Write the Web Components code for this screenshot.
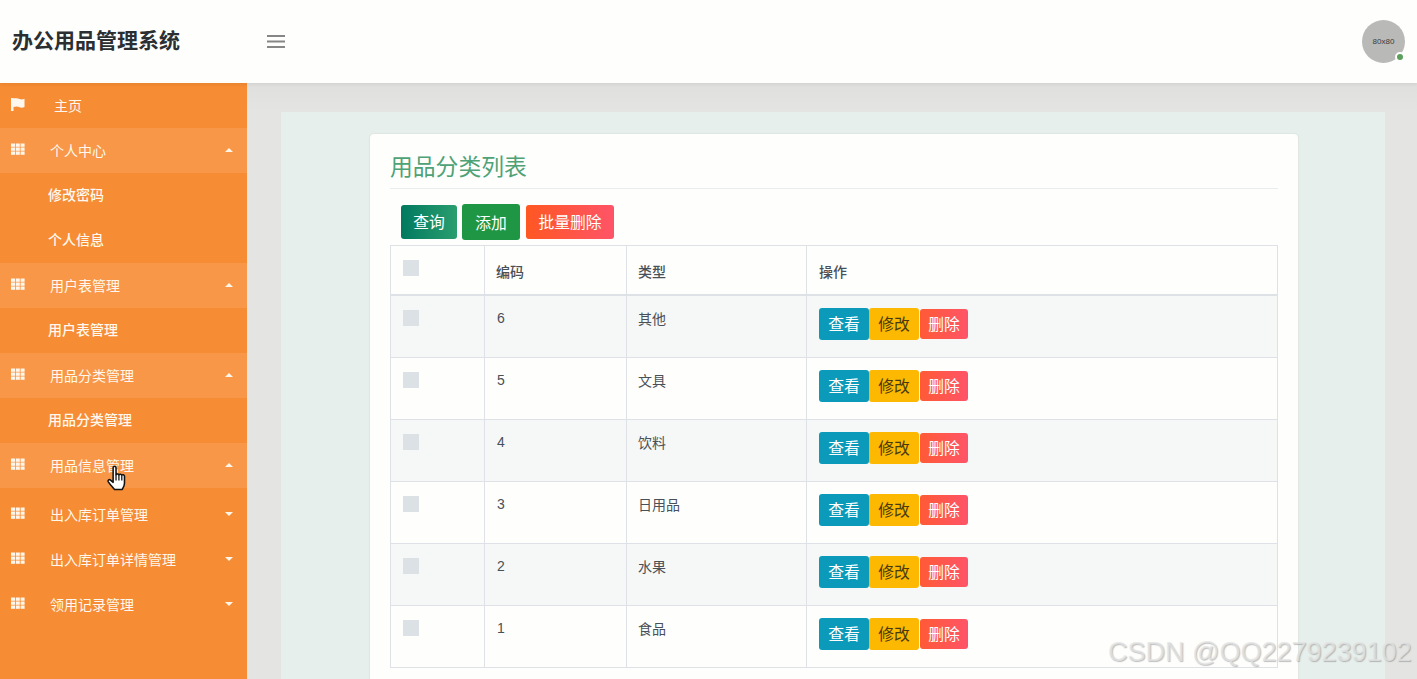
<!DOCTYPE html>
<html lang="zh">
<head>
<meta charset="utf-8">
<title>办公用品管理系统</title>
<style>
  html, body { margin: 0; height: 100%; overflow: hidden; }
  body {
    font-family: "Liberation Sans", "Noto Sans CJK SC", sans-serif;
    color: #495057;
    background: #e3e4e2;
  }
  #app { display: flex; flex-direction: column; height: 679px; position: relative; overflow: hidden; }
  #body { display: flex; flex: 1; min-height: 0; }
</style>
</head>
<body>
<div id="app">
  <top-bar title="办公用品管理系统"></top-bar>
  <div id="body">
    <side-menu></side-menu>
    <main-area>
      <list-card heading="用品分类列表">
        <tool-btn kind="search">查询</tool-btn>
        <tool-btn kind="add">添加</tool-btn>
        <tool-btn kind="del">批量删除</tool-btn>
      </list-card>
    </main-area>
  </div>
  <hand-cursor></hand-cursor>
  <water-mark>CSDN @QQ2279239102</water-mark>
</div>

<script>
// 顶部栏
class TopBar extends HTMLElement {
  connectedCallback() {
    this.attachShadow({mode: "open"}).innerHTML = `
      <style>
        :host { display: flex; align-items: center; height: 83px; flex: none; background: #fefffd;
                box-shadow: 0 1px 4px rgba(0,0,0,.08); position: relative; z-index: 2; }
        h1 { margin: 0 0 2px 12px; width: 255px; font-size: 21px; font-weight: 700; color: #2b2f31; line-height: 81px; }
        .burger { width: 18px; height: 13px; display: block; }
        .avatar { margin-left: auto; margin-right: 12px; width: 43px; height: 43px; border-radius: 50%;
                  background: #b9b9b7; display: flex; align-items: center; justify-content: center;
                  position: relative; font-size: 8px; color: #3c3c3c; }
        .dot { position: absolute; right: 0; bottom: 1px; width: 6px; height: 6px; border-radius: 50%;
               background: #5c9e5c; border: 2px solid #fefffd; }
      </style>
      <h1>${this.getAttribute("title")}</h1>
      <svg class="burger" viewBox="0 0 18 13"><path d="M0 1h18M0 6.500h18M0 12h18" stroke="#868686" stroke-width="2"/></svg>
      <div class="avatar">80x80<span class="dot"></span></div>`;
  }
}
customElements.define("top-bar", TopBar);

// 左侧菜单一项
const FLAG = `<svg width="14" height="13" viewBox="0 0 14 13"><path d="M0 0h2.500v13H0zM2.500 .6C5 -.2 7 .2 8.500 1c1.500.7 3 .6 5-.2v8.200c-2 .9-3.500.9-5 .2-1.500-.8-3.500-1.100-6-.2z" fill="#fff8ee"/></svg>`;
const GRID = `<svg width="14" height="13" viewBox="0 0 14 13" fill="#fff6ea">` +
  [0.500, 4.500, 8.500].map(y => [0, 4.800, 9.600].map(x => `<rect x="${x}" y="${y}" width="4" height="3.300"/>`).join("")).join("") + `</svg>`;

class MenuItem extends HTMLElement {
  connectedCallback() {
    const icon = this.getAttribute("icon");
    const arrow = this.getAttribute("arrow");
    const caret = arrow ? `<svg class="caret" width="8" height="4" viewBox="0 0 8 4"><path d="${arrow == "up" ? "M0 4L4 0l4 4z" : "M0 0l4 4 4-4z"}" fill="#fff6ea"/></svg>` : "";
    this.attachShadow({mode: "open"}).innerHTML = `
      <style>
        :host { display: flex; align-items: center; height: 45px; color: #fff8ee; font-size: 14px; position: relative; }
        :host([open]) { background: #f79747; }
        :host([gap]) { margin-top: 4px; }
        .ico { width: 14px; height: 13px; margin: 0 0 3px 11px; flex: none; display: block; line-height: 0; }
        .lbl { margin-left: 25px; margin-bottom: 1px; }
        :host([home]) .lbl { margin-left: 29px; margin-bottom: 2px; }
        :host([sub]) .lbl { margin-left: 48px; margin-bottom: 3px; font-weight: 500; }
        .caret { margin-left: auto; margin-right: 14px; margin-bottom: 2px; }
      </style>
      ${icon ? `<span class="ico">${icon == "flag" ? FLAG : GRID}</span>` : ""}
      <span class="lbl"><slot></slot></span>
      ${caret}`;
  }
}
customElements.define("menu-item", MenuItem);

class SideMenu extends HTMLElement {
  connectedCallback() {
    const menus = [
      ["主页", "flag", "", 1],
      ["个人中心", "grid", "up"], ["修改密码"], ["个人信息"],
      ["用户表管理", "grid", "up"], ["用户表管理"],
      ["用品分类管理", "grid", "up"], ["用品分类管理"],
      ["用品信息管理", "grid", "up"],
      ["出入库订单管理", "grid", "down", 0, 1],
      ["出入库订单详情管理", "grid", "down"],
      ["领用记录管理", "grid", "down"],
    ];
    this.attachShadow({mode: "open"}).innerHTML = `
      <style>
        :host { display: block; width: 247px; flex: none; background: #f68c33; position: relative; z-index: 1; }
      </style>
      ${menus.map(([t, ic, ar, home, gap]) => {
        if (!ic) return `<menu-item sub>${t}</menu-item>`;
        return `<menu-item icon="${ic}" ${ar ? `arrow="${ar}"` : ""} ${ar == "up" ? "open" : ""} ${home ? "home" : ""} ${gap ? "gap" : ""}>${t}</menu-item>`;
      }).join("")}`;
  }
}
customElements.define("side-menu", SideMenu);

// 内容区底色
class MainArea extends HTMLElement {
  connectedCallback() {
    this.attachShadow({mode: "open"}).innerHTML = `
      <style>
        :host { display: block; flex: 1; min-width: 0; padding: 29px 32px 0 34px;
                background: linear-gradient(180deg, #dfe0de, #e4e5e3 29px); }
        .panel { background: #e6efeb; padding: 22px 87px 0 89px; height: 100%; box-sizing: border-box; }
      </style>
      <div class="panel"><slot></slot></div>`;
  }
}
customElements.define("main-area", MainArea);

// 工具栏按钮 / 行内按钮
class ToolBtn extends HTMLElement {
  connectedCallback() {
    this.attachShadow({mode: "open"}).innerHTML = `
      <style>
        :host { display: inline-flex; align-items: center; justify-content: center; box-sizing: border-box;
                height: 34px; border-radius: 3px; color: #fff; font-size: 15.800px; white-space: nowrap; flex: none; }
        :host([kind=search]) { width: 56px; padding-bottom: 1px; background: linear-gradient(90deg, #01795f, #2a9e6f); }
        :host([kind=add]) { width: 58px; height: 36px; background: #1f9644; margin: 0 6px 0 5px; }
        :host([kind=del]) { width: 88px; padding-bottom: 1px; background: linear-gradient(90deg, #ff5722, #ff5468); }
        :host([kind=view]) { width: 50px; height: 32px; padding-top: 2px; background: #0c9abb; }
        :host([kind=edit]) { width: 50px; height: 32px; padding-top: 2px; background: #fdb802; color: #4a3a10; }
        :host([kind=remove]) { width: 48px; height: 30px; padding-top: 2px; margin-left: 1px; background: linear-gradient(90deg, #ff5a36, #ff5468); }
      </style>
      <slot></slot>`;
  }
}
customElements.define("tool-btn", ToolBtn);

class TableRow extends HTMLElement {
  connectedCallback() {
    const head = this.hasAttribute("head");
    const cells = (this.getAttribute("cells") || "").split(",");
    this.attachShadow({mode: "open"}).innerHTML = `
      <style>
        :host { display: grid; grid-template-columns: 94px 142px 180px 1fr; height: 62px; box-sizing: border-box;
                border-bottom: 1px solid #dee2e6; font-size: 14px; color: #495057; }
        :host([head]) { height: 50px; border-bottom-width: 2px; font-weight: 500; }
        :host([odd]) { background: #f6f8f8; }
        .c { border-right: 1px solid #dee2e6; padding: 11px 12px 0 12px; box-sizing: border-box; line-height: 22px; }
        .kind { padding: 12px 11px 0 11px; }
        .ops-cell { border-right: 0; padding-top: 12px; }
        :host([head]) .c { padding-top: 15px; }
        :host([head]) .num { padding-left: 11px; }
        .c.chk, :host([head]) .c.chk { padding-top: 14px; }
        .box { display: block; width: 16px; height: 16px; background: #dce1e6; }
        .ops { display: flex; align-items: center; height: 32px; }
      </style>
      <div class="c chk"><span class="box"></span></div>
      <div class="c num">${cells[0]}</div>
      <div class="c kind">${cells[1]}</div>
      <div class="c ops-cell">${head ? "操作" : `<div class="ops">
        <tool-btn kind="view">查看</tool-btn><tool-btn kind="edit">修改</tool-btn><tool-btn kind="remove">删除</tool-btn></div>`}</div>`;
  }
}
customElements.define("table-row", TableRow);

class ListCard extends HTMLElement {
  connectedCallback() {
    const rows = [["6", "其他"], ["5", "文具"], ["4", "饮料"], ["3", "日用品"], ["2", "水果"], ["1", "食品"]];
    this.attachShadow({mode: "open"}).innerHTML = `
      <style>
        :host { display: block; background: #fefffd; border-radius: 4px; padding: 20px; height: 600px; box-sizing: border-box; box-shadow: 0 0 2px rgba(0,0,0,.12); }
        h2 { margin: 0; font-size: 22.800px; font-weight: 400; line-height: 26px; height: 34px; color: #4fa276; border-bottom: 1px solid #e9ecef; }
        .tools { display: flex; align-items: center; height: 56px; padding: 10px 0 0 11px; box-sizing: border-box; }
        .table { border: 1px solid #dee2e6; border-bottom: 0; }
      </style>
      <h2>${this.getAttribute("heading")}</h2>
      <div class="tools"><slot></slot></div>
      <div class="table">
        <table-row head cells="编码,类型"></table-row>
        ${rows.map((r, i) => `<table-row cells="${r.join(",")}" ${i % 2 == 0 ? "odd" : ""}></table-row>`).join("")}
      </div>`;
  }
}
customElements.define("list-card", ListCard);

// 鼠标手形, 盖在菜单上面
class HandCursor extends HTMLElement {
  connectedCallback() {
    this.attachShadow({mode: "open"}).innerHTML = `
      <style>:host { position: absolute; left: 107px; top: 465px; width: 19px; height: 26px; z-index: 5; line-height: 0; }</style>
      <svg width="19" height="26" viewBox="0 0 19 27">
        <path d="M6 2.500C6 .8 9 .8 9 2.500V10c.5-1 2.500-1 3 .2.5-.9 2.500-.9 3 .3.700-.7 2.500-.5 2.800 1V19c0 3-1.500 5-2.500 6.500H7.500C5.500 23 3 20.500 1 17.500c-.8-1.500.7-3 2-2l3 2.500z" fill="#fff" stroke="#111" stroke-width="1.600" stroke-linejoin="round"/>
        <path d="M9 10v6M12 10.500V16M15 11v5" stroke="#111" stroke-width="1.300"/>
      </svg>`;
  }
}
customElements.define("hand-cursor", HandCursor);

class WaterMark extends HTMLElement {
  connectedCallback() {
    this.attachShadow({mode: "open"}).innerHTML = `
      <style>:host { position: absolute; left: 1108px; top: 634px; z-index: 6; font: 27px/36px "Liberation Sans", sans-serif;
        color: rgba(228,228,228,.8); text-shadow: 1px 1px 1px rgba(130,130,130,.5); white-space: nowrap; }</style>
      <slot></slot>`;
  }
}
customElements.define("water-mark", WaterMark);
</script>
</body>
</html>
